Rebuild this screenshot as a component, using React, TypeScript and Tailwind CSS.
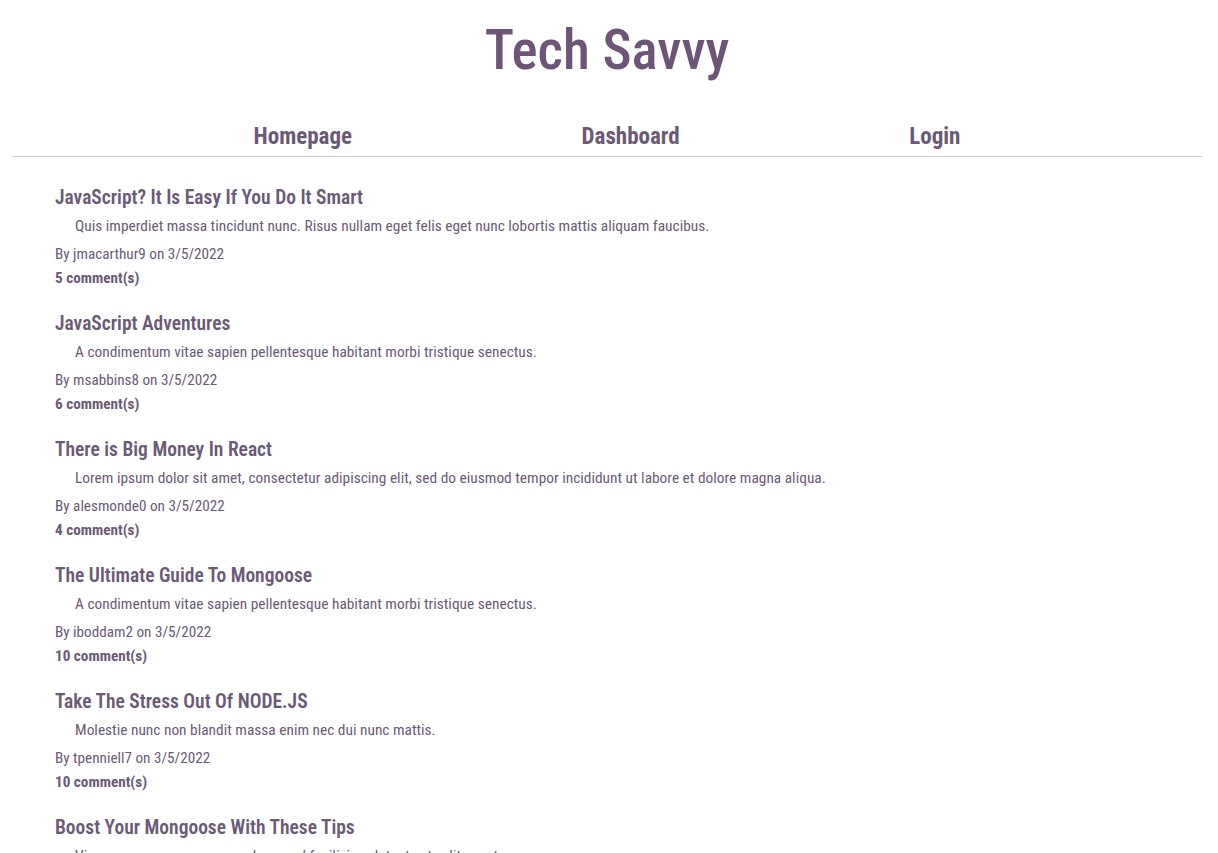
import React from "react";

interface Post {
  title: string;
  body: string;
  author: string;
  date: string;
  comments: number;
}

const posts: Post[] = [
  {
    title: "JavaScript? It Is Easy If You Do It Smart",
    body: "Quis imperdiet massa tincidunt nunc. Risus nullam eget felis eget nunc lobortis mattis aliquam faucibus.",
    author: "jmacarthur9",
    date: "3/5/2022",
    comments: 5,
  },
  {
    title: "JavaScript Adventures",
    body: "A condimentum vitae sapien pellentesque habitant morbi tristique senectus.",
    author: "msabbins8",
    date: "3/5/2022",
    comments: 6,
  },
  {
    title: "There is Big Money In React",
    body: "Lorem ipsum dolor sit amet, consectetur adipiscing elit, sed do eiusmod tempor incididunt ut labore et dolore magna aliqua.",
    author: "alesmonde0",
    date: "3/5/2022",
    comments: 4,
  },
  {
    title: "The Ultimate Guide To Mongoose",
    body: "A condimentum vitae sapien pellentesque habitant morbi tristique senectus.",
    author: "iboddam2",
    date: "3/5/2022",
    comments: 10,
  },
  {
    title: "Take The Stress Out Of NODE.JS",
    body: "Molestie nunc non blandit massa enim nec dui nunc mattis.",
    author: "tpenniell7",
    date: "3/5/2022",
    comments: 10,
  },
  {
    title: "Boost Your Mongoose With These Tips",
    body: "Viverra maecenas accumsan lacus vel facilisis volutpat est velit egestas.",
    author: "mpordal4",
    date: "3/5/2022",
    comments: 3,
  },
];

export default function App() {
  return (
    <div className="h-screen overflow-hidden bg-white font-['Roboto_Condensed','Liberation_Sans',sans-serif] text-[#6b5a75]">
      {/* Header */}
      <header className="ml-3 mr-4">
        <h1 className="pt-[14px] text-center text-[55px] leading-[72px] font-medium text-[#6d5577]">
          Tech Savvy
        </h1>
        <nav className="mt-[35px] flex justify-evenly border-b border-[#cccccc] px-3 pb-[3px] text-[23px] leading-[32px] font-bold">
          <a href="#">Homepage</a>
          <a href="#">Dashboard</a>
          <a href="#">Login</a>
        </nav>
      </header>

      {/* Posts */}
      <main className="px-[55px] pt-[27px]">
        {posts.map((post) => (
          <article key={post.title} className="mb-[20px]">
            <h2 className="text-[19.5px] leading-[28px] font-semibold">{post.title}</h2>
            <p className="pl-[20px] pt-[1px] text-[15.4px] leading-[27px]">{post.body}</p>
            <p className="pt-[2px] text-[15.2px] leading-[25px]">
              By {post.author} on {post.date}
            </p>
            <p className="text-[15.2px] leading-[23px] font-bold">
              {post.comments} comment(s)
            </p>
          </article>
        ))}
      </main>
    </div>
  );
}
